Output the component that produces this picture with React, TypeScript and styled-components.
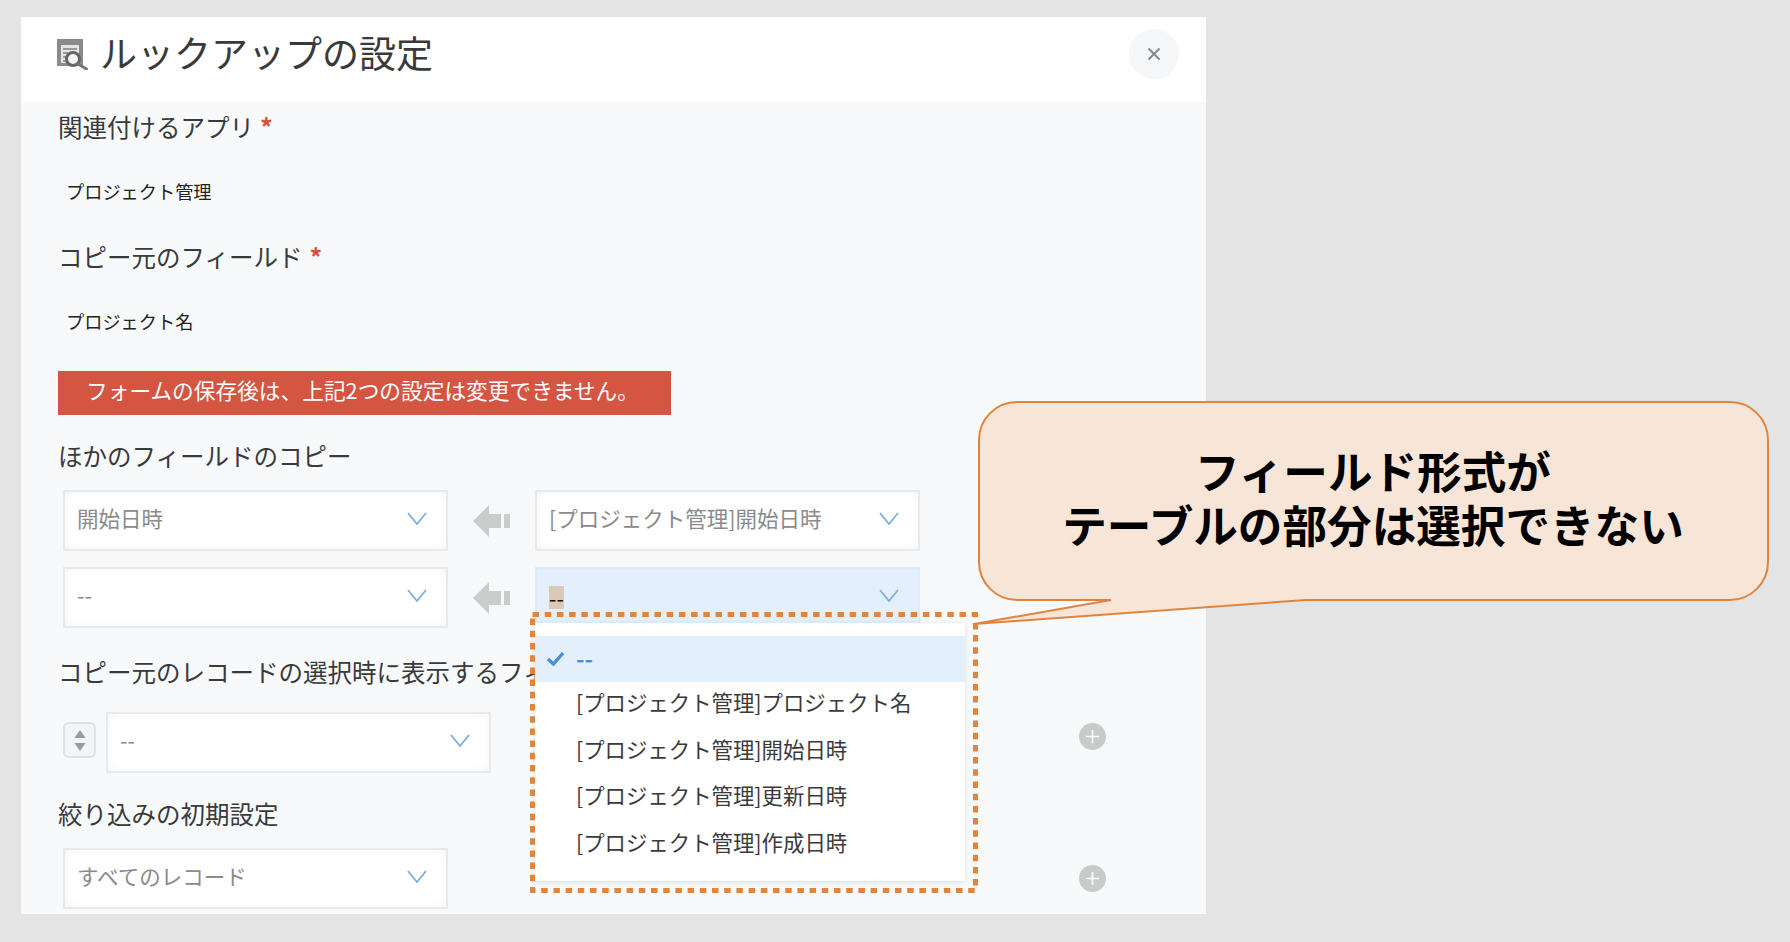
import { FC } from "react";
import styled, { createGlobalStyle } from "styled-components";

const GlobalStyle = createGlobalStyle`
  html, body {
    margin: 0;
    padding: 0;
    background: #e4e4e4;
  }
  body {
    font-family: "Noto Sans CJK JP", "Noto Sans", sans-serif;
    color: #333;
  }
`;

const Page = styled.div`
  position: relative;
  width: 1790px;
  height: 942px;
  padding: 17px 0 0 21px;
  box-sizing: border-box;
  overflow: hidden;
`;
const Modal = styled.div`
  width: 1185px;
  height: 897px;
  background: #f7f9fa;
  overflow: hidden;
`;
const Header = styled.div`
  display: flex;
  align-items: center;
  height: 85px;
  padding: 0 27px 11px 36px;
  box-sizing: border-box;
  background: #fff;
`;
const Title = styled.h1`
  flex-grow: 1;
  margin: 0 0 0 12px;
  padding-bottom: 4px;
  font-size: 37px;
  font-weight: 400;
  line-height: 50px;
  color: #3a3a3a;
`;
const CloseButton = styled.div`
  display: flex;
  align-items: center;
  justify-content: center;
  width: 50px;
  height: 50px;
  border-radius: 50%;
  background: #f6f7f8;
`;
const Body = styled.div`
  padding-left: 37px;
`;
const Label = styled.div<{ $top: number }>`
  display: flex;
  align-items: center;
  margin-top: ${({ $top }) => $top}px;
  height: 34px;
  font-size: 24.5px;
  white-space: nowrap;
  color: #3a3a3a;
`;
const Star = styled.span<{ $gap: number }>`
  margin-left: ${({ $gap }) => $gap}px;
  font-size: 25px;
  font-weight: 700;
  color: #d6523f;
`;
const Value = styled.div`
  margin-top: 31px;
  padding-left: 8px;
  height: 34px;
  font-size: 18.2px;
  line-height: 34px;
  color: #222;
`;
const Banner = styled.div`
  margin-top: 33px;
  width: 613px;
  height: 44px;
  padding-left: 28px;
  box-sizing: border-box;
  background: #d55543;
  font-size: 21.7px;
  line-height: 38px;
  color: #fff;
`;
const Row = styled.div<{ $top: number }>`
  display: flex;
  align-items: center;
  margin-top: ${({ $top }) => $top}px;
  margin-left: 5px;
  width: 1043px;
`;
const SelectBox = styled.div<{ $active?: boolean }>`
  display: flex;
  align-items: center;
  justify-content: space-between;
  width: 385px;
  height: 61px;
  padding: 0 19px 6px 12px;
  box-sizing: border-box;
  flex-shrink: 0;
  border: 2px solid ${({ $active }) => ($active ? "#dfebf5" : "#e8e9eb")};
  background: ${({ $active }) => ($active ? "#e3f0fb" : "#fff")};
  box-shadow: ${({ $active }) =>
    $active ? "none" : "inset 0 0 9px rgba(0, 0, 0, 0.05)"};
  font-size: 21.5px;
  color: #8a8a8a;
  white-space: nowrap;
`;
const SelectedText = styled.span`
  margin-top: 6px;
  background: #dcc8b6;
  color: #111;
  line-height: 23px;
`;
const ArrowSlot = styled.div`
  display: flex;
  margin: 0 25px;
`;
const SelectWrap = styled.div`
  position: relative;
`;
const Dropdown = styled.div`
  position: absolute;
  z-index: 2;
  left: 0;
  top: 56px;
  width: 430px;
  height: 258px;
  padding-top: 13px;
  box-sizing: border-box;
  background: #fff;
  box-shadow: 0 1px 5px rgba(0, 0, 0, 0.12);
`;
const SelectedOption = styled.div`
  display: flex;
  align-items: center;
  height: 46px;
  padding: 0 0 2px 12px;
  box-sizing: border-box;
  background: #e3f0fb;
  font-size: 23px;
  color: #4a90d9;
`;
const Option = styled.div`
  display: flex;
  align-items: center;
  height: 46.6px;
  padding: 0 0 7px 41px;
  box-sizing: border-box;
  font-size: 21.4px;
  color: #3a3a3a;
  white-space: nowrap;
`;
const OptionDash = styled.span`
  margin-left: 12px;
  font-weight: 700;
`;
const Highlight = styled.svg`
  position: absolute;
  left: -5px;
  top: -11px;
  pointer-events: none;
`;
const SpinButton = styled.div`
  display: flex;
  align-items: center;
  justify-content: center;
  width: 33px;
  height: 36px;
  margin: 0 10px 5px 0;
  box-sizing: border-box;
  flex-shrink: 0;
  border: 2px solid #dfe0e1;
  border-radius: 6px;
  background: #f3f4f5;
`;
const PlusButton = styled.div<{ $shift: number }>`
  display: flex;
  align-items: center;
  justify-content: center;
  width: 27px;
  height: 27px;
  margin-left: auto;
  margin-bottom: ${({ $shift }) => $shift}px;
  border-radius: 50%;
  background: #c9caca;
`;
const ChevronMark = styled.svg`
  margin-top: 2px;
  flex-shrink: 0;
`;
const Callout = styled.div`
  position: absolute;
  left: 970px;
  top: 395px;
  width: 805px;
  height: 235px;
  z-index: 3;
`;
const CalloutShape = styled.svg`
  position: absolute;
  left: 0;
  top: 0;
`;
const CalloutText = styled.div`
  position: relative;
  width: 806px;
  padding-top: 48px;
  text-align: center;
  font-size: 44.6px;
  font-weight: 700;
  line-height: 54px;
  color: #000;
`;

const LookupIcon: FC = () => (
  <svg width="31" height="31" viewBox="0 0 31 31">
    <rect x="0" y="0" width="26" height="27" fill="#8a8a8a" />
    <rect x="4" y="6" width="18" height="18" fill="#e4e4e4" />
    <path d="M6 10h14M6 14h5M6 18h4M6 22h5" stroke="#9a9a9a" strokeWidth="2" />
    <circle cx="16" cy="20" r="6.5" fill="#f4f4f4" stroke="#666" strokeWidth="3" />
    <path d="M21 25l8.5 5" stroke="#777" strokeWidth="3" strokeLinecap="round" />
  </svg>
);

const CloseIcon: FC = () => (
  <svg width="14" height="14" viewBox="0 0 14 14">
    <path d="M1.5 1.5l11 11M12.5 1.5l-11 11" stroke="#888" strokeWidth="2" />
  </svg>
);

const Chevron: FC = () => (
  <ChevronMark width="20" height="13" viewBox="0 0 20 13">
    <path d="M1 1l9 11 9-11" fill="none" stroke="#7ab0e0" strokeWidth="1.8" />
  </ChevronMark>
);

const CopyArrow: FC = () => (
  <svg width="37" height="32" viewBox="0 0 37 32">
    <path d="M0 16L16 0v9h12v14H16v9z" fill="#cbcccc" />
    <rect x="31" y="9" width="6" height="14" fill="#cbcccc" />
  </svg>
);

const CheckIcon: FC = () => (
  <svg width="17" height="15" viewBox="0 0 17 15">
    <path d="M1 8l5.5 5L16 2" fill="none" stroke="#4a90d9" strokeWidth="3.4" />
  </svg>
);

const SpinIcon: FC = () => (
  <svg width="12" height="23" viewBox="0 0 12 23">
    <path d="M6 1l5.5 8H.5zM.5 14h11L6 22z" fill="#9a9a9a" />
  </svg>
);

const PlusIcon: FC = () => (
  <svg width="15" height="15" viewBox="0 0 15 15">
    <path d="M7.5 1v13M1 7.5h13" stroke="#fff" strokeWidth="1.6" />
  </svg>
);

const options = ["開始日時", "更新日時", "作成日時"];

const App: FC = () => {
  return (
    <Page>
      <GlobalStyle />
      <Modal>
        <Header>
          <LookupIcon />
          <Title>ルックアップの設定</Title>
          <CloseButton>
            <CloseIcon />
          </CloseButton>
        </Header>
        <Body>
          <Label $top={7}>
            関連付けるアプリ<Star $gap={6}>*</Star>
          </Label>
          <Value>プロジェクト管理</Value>
          <Label $top={31}>
            コピー元のフィールド<Star $gap={7}>*</Star>
          </Label>
          <Value>プロジェクト名</Value>
          <Banner>フォームの保存後は、上記2つの設定は変更できません。</Banner>
          <Label $top={23}>ほかのフィールドのコピー</Label>
          <Row $top={18}>
            <SelectBox>
              開始日時
              <Chevron />
            </SelectBox>
            <ArrowSlot>
              <CopyArrow />
            </ArrowSlot>
            <SelectBox>
              [プロジェクト管理]開始日時
              <Chevron />
            </SelectBox>
          </Row>
          <Row $top={16}>
            <SelectBox>
              --
              <Chevron />
            </SelectBox>
            <ArrowSlot>
              <CopyArrow />
            </ArrowSlot>
            <SelectWrap>
              <SelectBox $active>
                <SelectedText>--</SelectedText>
                <Chevron />
              </SelectBox>
              <Dropdown>
                <SelectedOption>
                  <CheckIcon />
                  <OptionDash>--</OptionDash>
                </SelectedOption>
                <Option>[プロジェクト管理]プロジェクト名</Option>
                {options.map((name) => (
                  <Option key={name}>[プロジェクト管理]{name}</Option>
                ))}
                <Highlight width="448" height="281" viewBox="0 0 448 281">
                  <rect
                    x="2.5"
                    y="2.5"
                    width="443"
                    height="276"
                    fill="none"
                    stroke="#e0853f"
                    strokeWidth="5"
                    strokeDasharray="6.5 5.7"
                  />
                </Highlight>
              </Dropdown>
            </SelectWrap>
          </Row>
          <Label $top={26}>コピー元のレコードの選択時に表示するフィールド</Label>
          <Row $top={24}>
            <SpinButton>
              <SpinIcon />
            </SpinButton>
            <SelectBox>
              --
              <Chevron />
            </SelectBox>
            <PlusButton $shift={13}>
              <PlusIcon />
            </PlusButton>
          </Row>
          <Label $top={23}>絞り込みの初期設定</Label>
          <Row $top={18}>
            <SelectBox>
              すべてのレコード
              <Chevron />
            </SelectBox>
            <PlusButton $shift={0}>
              <PlusIcon />
            </PlusButton>
          </Row>
        </Body>
      </Modal>
      <Callout>
        <CalloutShape width="805" height="235" viewBox="0 0 805 235">
          <path
            d="M47 7H760A38 38 0 0 1 798 45V167A38 38 0 0 1 760 205H336L4 229L141 205H47A38 38 0 0 1 9 167V45A38 38 0 0 1 47 7Z"
            fill="#f7e5d8"
            stroke="#e0853f"
            strokeWidth="2"
          />
        </CalloutShape>
        <CalloutText>
          フィールド形式が
          <br />
          テーブルの部分は選択できない
        </CalloutText>
      </Callout>
    </Page>
  );
};

export default App;
